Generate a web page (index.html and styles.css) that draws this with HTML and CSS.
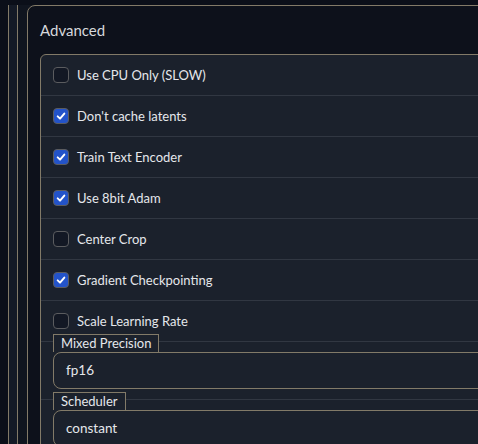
FILE: index.html
```html
<!DOCTYPE html>
<html>
<head>
<meta charset="utf-8">
<link rel="stylesheet" href="styles.css">
</head>
<body>
<div class="col1">
  <div class="col2">
    <div class="card">
      <div class="card-head">Advanced</div>
      <div class="form">
        <label class="row"><span class="cb"></span><span>Use CPU Only (SLOW)</span></label>
        <label class="row"><span class="cb on"><svg viewBox="0 0 16 16"><path d="M4.2 8.4 L6.9 11 L11.8 5.2"/></svg></span><span>Don't cache latents</span></label>
        <label class="row"><span class="cb on"><svg viewBox="0 0 16 16"><path d="M4.2 8.4 L6.9 11 L11.8 5.2"/></svg></span><span>Train Text Encoder</span></label>
        <label class="row"><span class="cb on"><svg viewBox="0 0 16 16"><path d="M4.2 8.4 L6.9 11 L11.8 5.2"/></svg></span><span>Use 8bit Adam</span></label>
        <label class="row"><span class="cb"></span><span>Center Crop</span></label>
        <label class="row"><span class="cb on"><svg viewBox="0 0 16 16"><path d="M4.2 8.4 L6.9 11 L11.8 5.2"/></svg></span><span>Gradient Checkpointing</span></label>
        <label class="row"><span class="cb"></span><span>Scale Learning Rate</span></label>
        <div class="field">
          <span class="field-label">Mixed Precision</span>
          <div class="input">fp16</div>
        </div>
        <div class="field">
          <span class="field-label">Scheduler</span>
          <div class="input">constant</div>
        </div>
      </div>
    </div>
  </div>
</div>
</body>
</html>
```
FILE: styles.css
```css
html, body {
  margin: 0;
  padding: 0;
  background: #0b0f19;
  overflow: hidden;
  height: 444px;
}
body {
  font-family: Lato, "Noto Sans", sans-serif;
  color: #e5e7eb;
}
.col1 {
  margin-left: 8px;
  border-left: 1px solid #827a68;
  background: #141a26;
  padding-left: 8px;
  width: 640px;
  height: 600px;
}
.col2 {
  border-left: 1px solid #827a68;
  background: #10151f;
  padding-left: 9px;
  height: 600px;
}
.card {
  margin-top: 5px;
  border: 1px solid #827a68;
  border-radius: 8px;
  background: #0d111b;
  padding-left: 12px;
  height: 700px;
}
.card-head {
  padding-top: 12px;
  font-size: 15px;
  line-height: 24px;
  color: #d6d8dc;
  margin-bottom: 12px;
}
.form {
  border: 1px solid #827a68;
  border-radius: 6px 0 0 0;
  background: #1b212c;
}
.row {
  display: flex;
  align-items: center;
  gap: 8px;
  height: 40px;
  padding-left: 12px;
  border-bottom: 1px solid #313742;
  font-size: 13px;
}
.cb {
  box-sizing: border-box;
  width: 16px;
  height: 16px;
  border: 1px solid #5b5c5f;
  border-radius: 4px;
  background: #131824;
  display: flex;
}
.cb.on {
  background: #2353c9;
}
.cb svg {
  width: 14px;
  height: 14px;
}
.cb svg path {
  fill: none;
  stroke: #ffffff;
  stroke-width: 2.2;
  stroke-linecap: round;
  stroke-linejoin: round;
}
.field {
  padding: 0 0 10px 12px;
  border-bottom: 1px solid #313742;
}
.field-label {
  display: block;
  width: fit-content;
  margin-top: -8px;
  border: 1px solid #827a68;
  border-bottom: none;
  background: #1b212c;
  padding: 0 7px;
  font-size: 13px;
  line-height: 17px;
}
.input {
  height: 35px;
  border: 1px solid #827a68;
  border-radius: 8px;
  background: #1b212c;
  padding-left: 12px;
  font-size: 13.5px;
  line-height: 35px;
}
```
